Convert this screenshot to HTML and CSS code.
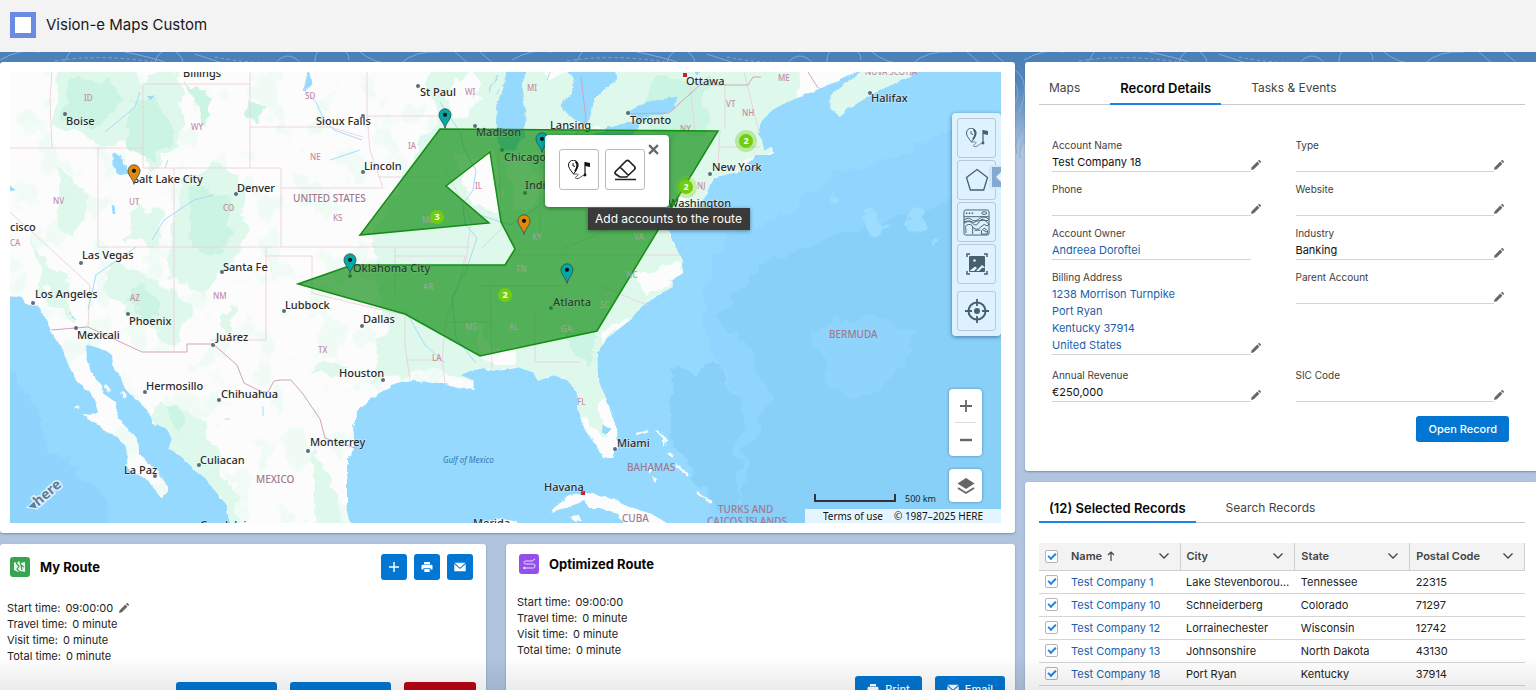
FILE: index.html
```html
<!DOCTYPE html>
<html lang="en">
<head>
<meta charset="utf-8">
<meta name="viewport" content="width=device-width, initial-scale=1">
<title>Vision-e Maps Custom</title>
<link rel="stylesheet" href="styles.css">
</head>
<body>
<svg class="defs" aria-hidden="true">
  <symbol id="pencil" viewBox="0 0 12 12"><path d="M1 11l.7-2.8L7.300 2.600l2.100 2.100L3.800 10.300z"/><path d="M8 1.900l.8-.8q.4-.4.8 0l1.300 1.300q.4.4 0 .8l-.8.8z"/></symbol>
  <symbol id="chevron" viewBox="0 0 12 8"><path d="M1.500 1.500L6 6l4.500-4.500" fill="none" stroke="currentColor" stroke-width="1.300"/></symbol>
  <symbol id="printer" viewBox="0 0 12 12"><path d="M3 1h6v2.200H3zM1.800 3.800h8.400q1.300 0 1.300 1.300v3.400H9.500V7h-7v1.500H.5V5.100q0-1.300 1.300-1.300zM3.300 7.800h5.400V11H3.300z"/></symbol>
  <symbol id="mail" viewBox="0 0 12 10"><path d="M.5.800h11L6 5.800z"/><path d="M.3 2l5.700 5 5.700-5v7.200H.3z"/></symbol>
  <symbol id="route-pin" viewBox="0 0 24 20"><path d="M6.500 14C3 9.500 1.500 7.500 1.500 5a4.800 4.800 0 0 1 9.600 0c0 2.500-1.500 5-4.600 9z" fill="none" stroke="currentColor" stroke-width="1"/><path d="M8.500 1.500c2.500 2 2.500 5-.5 10" fill="none" stroke="currentColor" stroke-width="1.700"/><path d="M6 3.200v2.600l2 .6" fill="none" stroke="currentColor"/><path d="M6.500 14.500c4-1.500 6 0 3.500 1.500s-2 3 1 2.500 3-3 6-3" fill="none" stroke="currentColor" stroke-width=".7"/><path d="M18 15V2" stroke="currentColor" stroke-width="1.200"/><path d="M18 2l5 1v4l-5-1z" fill="currentColor"/><circle cx="18" cy="15" r="1.400" fill="currentColor"/></symbol>
  <symbol id="marker" viewBox="0 0 14 21"><path d="M7 20.300C6 15 1 11.500 1 6.800a6 6 0 0 1 12 0C13 11.500 8 15 7 20.300z" stroke="#444" stroke-width=".8"/><circle cx="7" cy="6.800" r="2.100" fill="#111"/></symbol>
</svg>

<header class="app-header">
  <span class="app-logo" aria-hidden="true"></span>
  <h1 class="app-title">Vision-e Maps Custom</h1>
</header>

<main class="workspace">
  <svg class="backdrop" viewBox="0 0 1536 140" preserveAspectRatio="xMidYMin slice" aria-hidden="true">
    <g id="contours">
      <path d="M0 8q20-12 40-8M70 0q-10 20-30 26M125 0q30 6 45 12M155 12a14 14 0 0 1 28 0M195 2l30 10M275 12q12-16 27 0M315 10a17 17 0 0 1 34-2M360 0q15 12 30 11M400 12q15-14 40-12M455 0l14 12M480 0l14 12"/>
      <path d="M55 9q50-8 110 3M215 5q30 6 50 5" stroke-dasharray="3 3"/>
    </g>
    <use href="#contours" x="512"/><use href="#contours" x="1024"/>
    <path d="M1015 18q12 8 9 26t-9 20M1014 30q7 8 1 22M1026 72q-14 14-9 30M1026 86q-8 8-6 20"/>
  </svg>

  <div class="column column-left">
    <section class="card map-card" aria-label="Map">
      <div class="map">
        <svg class="map-canvas" viewBox="10 72 991 451" preserveAspectRatio="xMidYMid slice">
          <defs>
            <filter id="rough" x="0" y="0" width="1" height="1"><feTurbulence type="fractalNoise" baseFrequency=".045" numOctaves="4" seed="7"/><feDisplacementMap in="SourceGraphic" scale="26" xChannelSelector="R" yChannelSelector="G"/></filter>
            <filter id="coast" x="0" y="0" width="1" height="1"><feTurbulence type="fractalNoise" baseFrequency=".12" numOctaves="3" seed="3"/><feDisplacementMap in="SourceGraphic" scale="5" xChannelSelector="R" yChannelSelector="G"/></filter>
            <filter id="patches" x="0" y="0" width="1" height="1"><feTurbulence type="fractalNoise" baseFrequency=".035 .028" numOctaves="4" seed="12"/><feColorMatrix values="0 0 0 0 .85  0 0 0 0 .965  0 0 0 0 .91  14 0 0 0 -7.900"/></filter>
            <path id="land-shape" d="M0 60V296L20 297 27 303 39 306 43 313 48 323 51 331 58 342 63 350 67 362 73 373 77 381 90 392 95 402 98 412 90 415 82 414 95 423 107 432 117 437 125 445 128 457 125 467 137 473 150 483 160 497 168 491 165 482 157 470 148 463 138 452 137 438 128 430 118 417 115 403 105 393 100 383 92 373 87 360 86 345 100 348 112 355 113 367 120 375 125 388 137 400 150 413 153 423 167 428 172 438 169 448 182 457 193 468 205 478 217 493 227 505 228 515 232 530H353L347 513V460L355 448 353 427 358 410 370 400 387 388 400 382 413 380 433 383 443 383 457 388 475 390 473 380 460 375 470 371 483 368 497 370 517 367 533 372 538 381 553 375 567 380 578 393 577 410 585 430 597 447 603 458 613 458 618 447 617 430 608 403 598 380 597 353 607 338 630 320 640 308 657 295 673 287 672 279 683 273 681 257 673 243 668 230 672 215 680 207 690 215 697 208 705 197 712 180 716 177 758 167 748 163 755 155 772 155 771 147 764 151 762 140 758 134 760 123 772 110 787 102 800 97 817 90 840 80 857 72 870 60z"/>
            <clipPath id="land-clip"><use href="#land-shape"/></clipPath>
          </defs>
          <rect x="0" y="60" width="1020" height="480" fill="#96d9ff"/>
          <g filter="url(#rough)">
            <path fill="#8fd5fd" d="M1020 130L955 130 890 160 840 170 800 200 760 225 720 245 705 290 700 330 725 370 745 400 735 430 720 450 700 480 720 540 1020 540z"/>
            <path fill="#89d0f8" d="M1020 160L950 200 900 215 840 235 800 250 750 275 720 320 750 350 770 400 745 450 740 540H1020z"/>
            <path fill="#89d0f8" d="M673 370L720 370 745 400 735 430 740 540 700 480 670 440z"/>
            <path fill="#8ed4fb" d="M815 330L860 315 920 330 900 370 860 400 830 380z"/>
            <path fill="#8fd4fc" d="M0 370l30 20 20 60 40 30 40 70H0z"/>
          </g>
          <g fill="#9bdcff" filter="url(#rough)"><path d="M860 215h20l10 15-20 5zM905 208l15-4 5 20-15 5zM830 190l8 5-2 8zM930 235l8 4-6 10z"/></g>
          <g filter="url(#coast)" fill="#fcfcfc">
            <use href="#land-shape"/>
            <path fill="#e0f9ee" d="M863 70L847 82 832 93 830 107 840 117 850 107 867 97 887 87 910 77 912 70z"/>
            <path d="M550 512L560 502 570 496 587 493 613 498 630 507 650 513 672 526H625L617 514 600 508 587 508 584 500 570 507z"/>
            <path d="M571 516l8-1 2 5-7 1zM640 433l10-3M648 462l4 8-3 4zM652 476l5 3-2 4zM662 432l5 8-1 7M675 462l4 6M683 468l6 8M480 521l20-3 16 4v8h-36z"/>
            <path d="M637 434l12-3M656 430l7 7v9M668 453l5 4M677 464l11 12M697 492l14 10" stroke="#fcfcfc" stroke-width="2" fill="none"/>
            <path d="M75 407l4 2M104 385l5 6M121 392l4 3-1 3" stroke="#fcfcfc" stroke-width="3"/>
          </g>
          <g clip-path="url(#land-clip)">
            <rect x="0" y="60" width="480" height="480" filter="url(#patches)" opacity=".75"/>
            <g filter="url(#rough)" fill="#dff8ec">
              <path d="M55 60h60l30 25-5 50-40 10-45-20zM125 95l40-30 20 20-5 60-35 25zM182 180l40-20 25 30-5 60-40 50-35-30zM60 170l30 20-15 50-20-30zM135 200l30 20-10 30-30-15z"/>
              <path d="M30 240l40 50 10 35-30-20zM110 265l60 20 25 35-20 20-30-15-40-30zM160 400l45 20 15 50 25 60-15 10-40-70-50-45zM225 310h12v20h-12zM310 370l40-10-20 20z"/>
              <path d="M500 60h300v80l-60 30-40 60-30 80-60 40-10 60-30-20-60-15-80-5-60 15 15-60-15-80 30-60 40-80z"/>
              <path d="M425 60h85l-10 60-30 20-25-10-20-40zM395 245h110l20-30 20 60-30 80-50 10-40-10-10-60zM572 395h25l12 50-15-10zM315 440l20 60 20 40-40-10z"/>
            </g>
            <g filter="url(#rough)" fill="#cbf4e2">
              <path d="M70 80l40-5 15 30-30 20-35-10zM130 100l25 0 20 40-25 20-20-10zM190 85l25 10-5 25-15-15zM245 95l20 10-3 20-15-10zM190 190l35 5 10 40-20 20-30-15zM130 285l35 25-15 10-30-20z"/>
              <path d="M660 75l50 5-5 50-40 10-30-15zM570 330l25 5-5 30-20-10zM170 405l15 10-5 20-15-15z"/>
            </g>
            <g fill="#fcfcfc" filter="url(#rough)">
              <path d="M450 75l20 0 10 25-15 20-20-20zM455 155l40-5 10 60-30 0zM505 160h30l10 40-30 10zM590 130l20-5 5 15zM540 60h40v16h-30zM475 330l40 20-5 15-30-5zM640 275l35-15 5 20-40 20zM600 330l30-20 5 8-30 20zM675 185l20-10 5 10-20 20z"/>
            </g>
          </g>
          <g class="lake" filter="url(#coast)">
            <path d="M507 60h28l-12 17-1 16 3 20-1 24-10 14-14-3-4-20 2-25 8-20zM496 95l4-8M553 60h64l-2 22-10 6-12 12-2 14-6 11-12-6-12-13 14-18-2-12zM585 140l22-12 26-6 12-8-18 30-34 4zM627 112l23-10 27-5-3 12-14 5-26 3zM498 75l-10 18"/>
            <path d="M113 153l8 4 7 16-8 2-7-12zM111 205l5 4-2 5zM305 88l4-16 2 12-7 8zM604 425l7 4-5 5-4-4zM10 185l5 4-4 2zM147 95l7 2-3 3zM68 312l8 8M690 60h16l-8 14z"/>
          </g>
          <g class="rivers">
            <path d="M308 72l-4 18 12 12 8 18 10 10 28 10M440 102l20 30 4 18 12 20-3 20-10 14 2 20 12 14-10 30-15 30 4 40 20 25M152 240l12-20 30-20 20-5M88 310l8-35 40-28M105 132l30-25 5-15M405 310l20 35 20 18M330 160l30-10M165 168l3-8M480 215l30 10 30-20 20-25M263 406v10M225 419h5M555 60l-8 20"/>
          </g>
          <g class="state-lines">
            <path d="M52 72l-2 28 2 48M10 148h133M143 84v84h138M143 84h107M250 72v96M98 148v99h372M174 168v183M250 127h80l33 10M367 72v44h77M367 116l3 34 13 38M281 168v79M281 188h102M378 177h62M266 247v93h-56M266 256h46v37l40 10 53 12v30l5 35M395 247v9h70l-2 10M10 212l80 73-2 42M395 255v40M405 360h36M446 170l25 50-5 40-20 60-4 40 4 30M446 322h45M490 285l2 85M535 310v52h45M540 160v80M540 160h60M600 135v50M510 255h170M480 286h90M600 286l50 20M560 250l60-25 60-5M630 225l30-25M690 85l5 45M725 84v45M744 72l15 60M718 147h42M720 130l-2 35M498 148l4 80-20 20"/>
          </g>
          <g class="country-lines">
            <path d="M51 330l37-3 54 25h45v-8h26l24 21 7 18 18 9h6l6-11 6-1h11l12 14 17 25 5 19 30 10M581 76l5 44-10 15M627 114l42-1 31-28h48l5-8h8M808 72l10 16"/>
          </g>
          <g class="state-names">
            <text x="84" y="101">ID</text><text x="191" y="130">WY</text><text x="305" y="99">SD</text><text x="465" y="95">WI</text><text x="527" y="91">MI</text><text x="310" y="160">NE</text><text x="408" y="149">IA</text><text x="475" y="189">IL</text><text x="53" y="204">NV</text><text x="129" y="205">UT</text><text x="223" y="211">CO</text><text x="333" y="221">KS</text><text x="10" y="246">CA</text><text x="130" y="301">AZ</text><text x="213" y="299">NM</text><text x="318" y="353">TX</text><text x="432" y="361">LA</text><text x="577" y="405">FL</text><text x="778" y="81">ME</text><text x="726" y="107">VT</text><text x="742" y="116">NH</text><text x="680" y="132">NY</text><text x="697" y="189">NJ</text><text x="865" y="75">NOVA SCOTIA</text>
          </g>
          <g class="country-names">
            <text x="293" y="202">UNITED STATES</text><text x="256" y="483">MEXICO</text><text x="627" y="471">BAHAMAS</text><text x="622" y="522">CUBA</text><text x="829" y="338">BERMUDA</text><text x="718" y="513">TURKS AND</text><text x="707" y="525">CAICOS ISLANDS</text>
          </g>
          <text class="sea-name" x="443" y="463">Gulf of Mexico</text>
          <g class="city-dots"><circle cx="65" cy="114" r="2"/><circle cx="363" cy="116" r="2"/><circle cx="363" cy="172" r="2"/><circle cx="418" cy="86" r="2"/><circle cx="475" cy="126" r="2"/><circle cx="502" cy="150" r="2"/><circle cx="525" cy="193" r="2"/><circle cx="628" cy="113" r="2"/><circle cx="710" cy="174" r="2"/><circle cx="870" cy="93" r="2"/><circle cx="236" cy="194" r="2"/><circle cx="81" cy="263" r="2"/><circle cx="222" cy="272" r="2"/><circle cx="33" cy="303" r="2"/><circle cx="128" cy="314" r="2"/><circle cx="76" cy="328" r="2"/><circle cx="213" cy="345" r="2"/><circle cx="284" cy="311" r="2"/><circle cx="362" cy="326" r="2"/><circle cx="383" cy="380" r="2"/><circle cx="145" cy="392" r="2"/><circle cx="219" cy="400" r="2"/><circle cx="308" cy="451" r="2"/><circle cx="199" cy="465" r="2"/><circle cx="155" cy="476" r="2"/><circle cx="551" cy="308" r="2"/><circle cx="350" cy="276" r="2"/><circle cx="615" cy="449" r="2"/></g>
          <path d="M683 73h4v4h-4zM581 491h4v4h-4z" fill="#c8242b"/>
          <g class="city-names">
            <text x="183" y="77">Billings</text><text x="66" y="125">Boise</text><text x="420" y="96">St Paul</text><text x="316" y="125">Sioux Falls</text><text x="364" y="170">Lincoln</text><text x="133" y="183">Salt Lake City</text><text x="237" y="192">Denver</text><text x="10" y="231">cisco</text><text x="82" y="259">Las Vegas</text><text x="223" y="271">Santa Fe</text><text x="35" y="298">Los Angeles</text><text x="129" y="325">Phoenix</text><text x="77" y="339">Mexicali</text><text x="216" y="341">Juárez</text><text x="285" y="309">Lubbock</text><text x="363" y="323">Dallas</text><text x="339" y="377">Houston</text><text x="146" y="390">Hermosillo</text><text x="221" y="398">Chihuahua</text><text x="310" y="446">Monterrey</text><text x="200" y="464">Culiacan</text><text x="124" y="474">La Paz</text><text x="200" y="529">Guadalajara</text><text x="473" y="527">Merida</text><text x="544" y="491">Havana</text><text x="617" y="447">Miami</text><text x="686" y="85">Ottawa</text><text x="630" y="124">Toronto</text><text x="550" y="129">Lansing</text><text x="712" y="171">New York</text><text x="668" y="207">Washington</text><text x="871" y="102">Halifax</text>
          </g>
          <path d="M440 129L718 131 597 331 480 356 405 314 298 284 352 265H505L515 249 501 222 490 152 446 186 489 223 360 235z" fill="#078a0b" fill-opacity=".66" stroke="#128e14" stroke-width="1.500"/>
          <g class="state-names tinted">
            <text x="422" y="223">MO</text><text x="423" y="290">AR</text><text x="465" y="330">MS</text><text x="509" y="330">AL</text><text x="561" y="332">GA</text><text x="600" y="308">SC</text><text x="626" y="278">NC</text><text x="634" y="240">VA</text><text x="532" y="240">KY</text><text x="516" y="272">TN</text>
          </g>
          <g class="city-names tinted">
            <text x="476" y="136">Madison</text><text x="504" y="161">Chicago</text><text x="525" y="189">Indianapolis</text><text x="353" y="272">Oklahoma City</text><text x="553" y="306">Atlanta</text>
          </g>
          <g class="clusters">
            <circle cx="746" cy="141" r="11" fill-opacity=".35"/><circle cx="686" cy="187" r="11" fill-opacity=".35"/>
            <circle cx="746" cy="141" r="7"/><circle cx="686" cy="187" r="7"/><circle cx="437" cy="217" r="7"/><circle cx="505" cy="295" r="7"/>
            <text x="746" y="144">2</text><text x="686" y="190">2</text><text x="437" y="220">3</text><text x="505" y="298">2</text>
          </g>
          <g fill="#00aaa6"><use href="#marker" x="438" y="108" width="14" height="21"/><use href="#marker" x="535" y="132" width="14" height="21"/><use href="#marker" x="343" y="253" width="14" height="21"/><use href="#marker" x="560" y="263" width="14" height="21"/></g>
          <g fill="#e08a0b"><use href="#marker" x="127" y="164" width="14" height="21"/><use href="#marker" x="517" y="214" width="14" height="21"/></g>
          <g transform="rotate(-41 45 493)">
            <text class="here-mark" x="31" y="499">here</text>
            <path d="M22 492h10l-3 8z" fill="#5d7f9f" stroke="#dff1fc" stroke-width="1"/>
          </g>
        </svg>

        <div class="map-popup">
          <button class="popup-action" aria-label="Add accounts to the route"><svg class="icon-pin"><use href="#route-pin"/></svg></button>
          <button class="popup-action" aria-label="Erase"><svg class="icon-eraser" viewBox="0 0 24 22"><path d="M2.500 12.500L13 2q1.500-1.200 3 0l5.500 5.500q1.300 1.500 0 3L13.500 18H7l-4.500-3q-1-1.200 0-2.500zM7 8l8.500 8.500" fill="none" stroke="#222" stroke-width="1.700" stroke-linejoin="round"/><path d="M2 20.500h21" stroke="#222" stroke-width="1.500"/></svg></button>
          <button class="popup-close" aria-label="Close"><svg viewBox="0 0 10 10"><path d="M1 1l8 8M9 1L1 9" stroke="#666" stroke-width="2"/></svg></button>
        </div>
        <div class="tooltip" role="tooltip">Add accounts to the route</div>

        <div class="toolbar">
          <button class="tool" aria-label="Route"><svg class="icon-pin"><use href="#route-pin"/></svg></button>
          <button class="tool" aria-label="Polygon"><svg viewBox="0 0 24 24"><path d="M12 1.500L22.500 9.500 18.700 22H5.300L1.500 9.500z" fill="none" stroke="currentColor" stroke-width="1.300"/></svg></button>
          <button class="tool" aria-label="Map window"><svg class="icon-large" viewBox="0 0 28 28"><g fill="none" stroke="currentColor"><rect x="1" y="1" width="26" height="26" rx="2"/><path d="M1 8h26"/><rect x="19.500" y="3" width="5" height="2.500" rx="1.200"/><path d="M3 4.500h1.500M6 4.500h1.500M9 4.500h1.500" stroke-width="1.500"/><path d="M1 11q5-3 8 0t8-1 10 1M1 15q5-4 9 0t7-2 10 3M3 25v-4q-2-4 3-5 5 0 4 5v5M10 19q5 4 8 0l4-3q3 3 5 0M1 13q6-2 10 1 5-3 15-2M12 22h6M19 26q-1-4 3-6 5 2 3 6zM21 22l4 2"/></g></svg></button>
          <button class="tool" aria-label="Image"><svg viewBox="0 0 24 24"><path d="M2 5V2h3M19 2h3v3M22 19v3h-3M5 22H2v-3" fill="none" stroke="currentColor" stroke-width="1.500"/><path fill="currentColor" d="M5 4h14q1 0 1 1v14q0 1-1 1H5q-1 0-1-1V5q0-1 1-1z"/><circle cx="9.500" cy="8.500" r="1.300" fill="#e4f2fd"/><path d="M5 18.500l5-4 2 1.500-3 3H5zM11 19l6-6 2.500 2v1.500l-2-1-3.500 3.500z" fill="#e4f2fd"/></svg></button>
          <button class="tool tool-locate" aria-label="Locate"><svg viewBox="0 0 24 24"><circle cx="12" cy="12" r="8.500" fill="none" stroke="currentColor" stroke-width="2"/><circle cx="12" cy="12" r="3" fill="currentColor"/><path d="M12 0v7M12 17v7M0 12h7M17 12h7" stroke="currentColor" stroke-width="1.800"/></svg></button>
        </div>
        <button class="toolbar-toggle" aria-label="Collapse toolbar"></button>

        <div class="map-controls">
          <div class="zoom-box">
            <button aria-label="Zoom in"><svg viewBox="0 0 12 12"><path d="M6 0v12M0 6h12" stroke="currentColor" stroke-width="1.800"/></svg></button>
            <button aria-label="Zoom out"><svg viewBox="0 0 12 12"><path d="M0 6h12" stroke="currentColor" stroke-width="2.400"/></svg></button>
          </div>
          <button class="layers" aria-label="Layers"><svg viewBox="0 0 18 18"><path d="M9 1l8.500 5.500L9 12 .5 6.500z" fill="currentColor"/><path d="M1 11l8 5 8-5" fill="none" stroke="currentColor" stroke-width="1.800"/></svg></button>
        </div>
        <div class="scale"><span class="scale-bar"></span><span class="scale-text">500 km</span></div>
        <div class="legal"><a href="#">Terms of use</a><span>© 1987–2025 HERE</span></div>
      </div>
    </section>

    <div class="routes">
      <section class="card my-route">
        <div class="route-head">
          <svg class="route-icon" viewBox="0 0 20 20"><rect width="20" height="20" rx="3" fill="#36a451"/><path d="M4 5l3 1 2-2 2 2 4-1v10l-4-1-3 1-4-2z" fill="#e9f8ec"/><path d="M6 6l3 3-2 3 3 3M10 5l1 3 3 2M11 9l1 4" stroke="#36a451" stroke-width="1.200" fill="none"/></svg>
          <h2>My Route</h2>
          <div class="head-actions">
            <button class="btn-square" aria-label="Add"><svg viewBox="0 0 12 12"><path d="M6 1v10M1 6h10" stroke="currentColor" stroke-width="1.500"/></svg></button>
            <button class="btn-square" aria-label="Print"><svg><use href="#printer"/></svg></button>
            <button class="btn-square" aria-label="Email"><svg><use href="#mail"/></svg></button>
          </div>
        </div>
        <ul class="times">
          <li>Start time: <span>09:00:00</span><button class="edit" aria-label="Edit start time"><svg><use href="#pencil"/></svg></button></li>
          <li>Travel time: <span>0 minute</span></li>
          <li>Visit time: <span>0 minute</span></li>
          <li>Total time: <span>0 minute</span></li>
        </ul>
        <div class="route-actions"><button class="btn wide" aria-label="Optimize"></button><button class="btn wide" aria-label="Save"></button><button class="btn danger" aria-label="Clear"></button></div>
      </section>

      <section class="card optimized">
        <div class="route-head">
          <svg class="route-icon" viewBox="0 0 20 20"><rect width="20" height="20" rx="3" fill="#9350ea"/><path d="M13 7H6.500Q5 7 5 8.500T6.500 10h8q1.500 0 1.500 2t-1.500 2H7M13 7l3-2" fill="none" stroke="#eadcff" stroke-width="1"/><circle cx="5.500" cy="14" r="1.300" fill="#eadcff"/></svg>
          <h2>Optimized Route</h2>
        </div>
        <ul class="times">
          <li>Start time: <span>09:00:00</span></li>
          <li>Travel time: <span>0 minute</span></li>
          <li>Visit time: <span>0 minute</span></li>
          <li>Total time: <span>0 minute</span></li>
        </ul>
        <div class="route-actions"><button class="btn"><svg><use href="#printer"/></svg>Print</button><button class="btn"><svg><use href="#mail"/></svg>Email</button></div>
      </section>
    </div>
  </div>

  <div class="column column-right">
    <section class="card details">
      <nav class="tabs">
        <a href="#">Maps</a><a href="#" class="active" aria-current="page">Record Details</a><a href="#">Tasks &amp; Events</a>
      </nav>
      <dl class="fields">
        <div class="field"><dt>Account Name</dt><dd>Test Company 18</dd><button class="edit" aria-label="Edit Account Name"><svg><use href="#pencil"/></svg></button></div>
        <div class="field"><dt>Type</dt><dd></dd><button class="edit" aria-label="Edit Type"><svg><use href="#pencil"/></svg></button></div>
        <div class="field"><dt>Phone</dt><dd></dd><button class="edit" aria-label="Edit Phone"><svg><use href="#pencil"/></svg></button></div>
        <div class="field"><dt>Website</dt><dd></dd><button class="edit" aria-label="Edit Website"><svg><use href="#pencil"/></svg></button></div>
        <div class="field"><dt>Account Owner</dt><dd><a href="#">Andreea Doroftei</a></dd></div>
        <div class="field"><dt>Industry</dt><dd>Banking</dd><button class="edit" aria-label="Edit Industry"><svg><use href="#pencil"/></svg></button></div>
        <div class="field address"><dt>Billing Address</dt><dd><a href="#">1238 Morrison Turnpike<br>Port Ryan<br>Kentucky 37914<br>United States</a></dd><button class="edit" aria-label="Edit Billing Address"><svg><use href="#pencil"/></svg></button></div>
        <div class="field"><dt>Parent Account</dt><dd></dd><button class="edit" aria-label="Edit Parent Account"><svg><use href="#pencil"/></svg></button></div>
        <div class="field"><dt>Annual Revenue</dt><dd>€250,000</dd><button class="edit" aria-label="Edit Annual Revenue"><svg><use href="#pencil"/></svg></button></div>
        <div class="field"><dt>SIC Code</dt><dd></dd><button class="edit" aria-label="Edit SIC Code"><svg><use href="#pencil"/></svg></button></div>
      </dl>
      <div class="details-actions"><button class="btn">Open Record</button></div>
    </section>

    <section class="card records">
      <nav class="tabs">
        <a href="#" class="active" aria-current="page">(12) Selected Records</a><a href="#">Search Records</a>
      </nav>
      <table class="grid">
        <colgroup><col class="col-check"><col class="col-name"><col><col><col></colgroup>
        <thead><tr>
          <th><input type="checkbox" checked aria-label="Select all"></th>
          <th class="name"><button>Name <svg class="arrow" viewBox="0 0 8 10"><path d="M4 10V1M1 4l3-3 3 3" fill="none" stroke="currentColor" stroke-width="1.200"/></svg><svg class="chev"><use href="#chevron"/></svg></button></th>
          <th><button>City<svg class="chev"><use href="#chevron"/></svg></button></th>
          <th><button>State<svg class="chev"><use href="#chevron"/></svg></button></th>
          <th><button>Postal Code<svg class="chev"><use href="#chevron"/></svg></button></th>
        </tr></thead>
        <tbody>
          <tr><td><input type="checkbox" checked aria-label="Select Test Company 1"></td><td><a href="#">Test Company 1</a></td><td>Lake Stevenborough</td><td>Tennessee</td><td>22315</td></tr>
          <tr><td><input type="checkbox" checked aria-label="Select Test Company 10"></td><td><a href="#">Test Company 10</a></td><td>Schneiderberg</td><td>Colorado</td><td>71297</td></tr>
          <tr><td><input type="checkbox" checked aria-label="Select Test Company 12"></td><td><a href="#">Test Company 12</a></td><td>Lorrainechester</td><td>Wisconsin</td><td>12742</td></tr>
          <tr><td><input type="checkbox" checked aria-label="Select Test Company 13"></td><td><a href="#">Test Company 13</a></td><td>Johnsonshire</td><td>North Dakota</td><td>43130</td></tr>
          <tr><td><input type="checkbox" checked aria-label="Select Test Company 18"></td><td><a href="#">Test Company 18</a></td><td>Port Ryan</td><td>Kentucky</td><td>37914</td></tr>
        </tbody>
      </table>
    </section>
  </div>
</main>
<div class="bottom-shade"></div>
</body>
</html>
```

FILE: styles.css
```css
* { box-sizing: border-box; }
body {
  margin: 0;
  height: 100vh;
  overflow: hidden;
  display: flex;
  flex-direction: column;
  font: 11px/16px Inter, "Liberation Sans", sans-serif;
  color: #222;
  background: #b0c4df;
}
button { font: inherit; color: inherit; padding: 0; border: 0; background: none; cursor: pointer; }
a { color: #1b5fab; text-decoration: none; }
h1, h2, ul, dl, dd { margin: 0; padding: 0; }
svg { display: block; }
.defs { position: absolute; width: 0; height: 0; }

.app-header { flex: none; display: flex; align-items: center; gap: 10px; height: 52px; padding: 0 10px 2px; background: #f3f3f3; }
.app-logo { width: 26px; height: 26px; border: 5px solid #6b8be3; background: #fff; }
.app-title { font-size: 15px; font-weight: 400; line-height: 20px; color: #181818; }

.workspace {
  position: relative;
  flex: 1;
  min-height: 0;
  display: grid;
  grid-template-columns: 1015fr 511fr;
  gap: 10px;
  padding-top: 10px;
  background: linear-gradient(#4a80b7, #5488bd 35px, #b0c4df 100px);
}
.backdrop { position: absolute; top: 0; left: 0; width: 100%; height: 140px; fill: none; stroke: #86abd3; stroke-width: 1; }
.column { position: relative; min-width: 0; display: flex; flex-direction: column; gap: 11px; }
.card { background: #fff; border-radius: 3px; box-shadow: 0 1px 2px rgba(60, 80, 110, .45); }
.column-right .card { border-radius: 3px 0 0 3px; }

.map-card { padding: 10px 14px 10px 10px; }
.map { position: relative; height: 451px; overflow: hidden; }
.map-canvas { width: 100%; height: 100%; }
.map-canvas text { font-family: "Noto Sans", "Open Sans", sans-serif; }
.lake { fill: #96d9ff; stroke: #96d9ff; stroke-width: 1; }
.rivers { fill: none; stroke: #a6dcfb; stroke-width: 1; }
.state-lines { fill: none; stroke: #eacbd6; stroke-width: 1; opacity: .75; }
.country-lines { fill: none; stroke: #d3a4b4; stroke-width: 1; }
.city-names { font-size: 11px; font-weight: 500; fill: #2b2b2b; stroke: #fff; stroke-width: 1; stroke-opacity: .5; paint-order: stroke; }
.city-names.tinted { fill: #264029; stroke: #9aca9c; stroke-opacity: .4; }
.city-dots { fill: #5d6b82; }
.state-names { font-size: 8px; font-weight: 500; fill: #c68ba4; }
.state-names.tinted { fill: #9ba594; }
.country-names { font-size: 10px; font-weight: 500; fill: #a17a92; }
.sea-name { font-size: 8px; font-style: italic; fill: #3478ab; }
.clusters { fill: #6fce0d; }
.clusters text { font-size: 9px; font-weight: 700; fill: #fff; text-anchor: middle; }
.map-canvas .here-mark { font: 700 14px "Noto Sans", sans-serif; fill: #5d7f9f; stroke: #dff1fc; stroke-width: 3; paint-order: stroke; }

.map-popup { position: absolute; left: 535px; top: 63px; display: flex; gap: 6px; width: 124px; height: 72px; padding: 14px; background: #fff; border-radius: 4px; box-shadow: 0 1px 4px rgba(0, 0, 0, .4); }
.popup-action { display: grid; place-items: center; width: 40px; height: 41px; border: 1px solid #bbb; border-radius: 3px; color: #111; }
.icon-pin { width: 24px; height: 20px; }
.icon-eraser { width: 24px; height: 22px; }
.popup-close { position: absolute; right: 10px; top: 9px; width: 11px; height: 11px; }
.tooltip { position: absolute; left: 578px; top: 136px; padding: 3px 8px 3px 7px; line-height: 16px; font-size: 12px; color: #fff; background: #3a3a3a; box-shadow: 0 1px 4px rgba(0, 0, 0, .4); white-space: nowrap; }

.toolbar { position: absolute; right: 0; top: 41px; display: flex; flex-direction: column; gap: 2px; width: 49px; padding: 5px; background: rgba(232, 245, 255, .88); border-radius: 4px; box-shadow: 0 1px 4px rgba(40, 80, 130, .7); }
.tool { display: grid; place-items: center; height: 40px; border: 1px solid #b5c8dc; border-radius: 3px; color: #47606e; }
.tool svg { width: 24px; height: 24px; }
.tool .icon-pin { height: 20px; }
.tool .icon-large { width: 27px; height: 27px; }
.tool-locate { margin-top: 5px; }
.toolbar-toggle { position: absolute; right: 0; top: 93px; width: 12px; height: 24px; background: #84a9d1; border: 2px solid #d3e7f8; border-width: 2px 0 2px 3px; border-radius: 3px 0 0 3px; }
.toolbar-toggle::after { content: ""; position: absolute; right: 0; top: 5px; border: 5px solid transparent; border-left: 0; border-right-color: #e5f2fc; }

.map-controls { position: absolute; right: 19px; bottom: 21px; width: 33px; display: flex; flex-direction: column; gap: 13px; color: #666; }
.zoom-box, .layers { background: #fff; border-radius: 4px; box-shadow: 0 0 3px #4d7fae; }
.zoom-box { padding: 0 6px; }
.zoom-box button { display: grid; place-items: center; width: 100%; height: 33px; }
.zoom-box button + button { height: 34px; border-top: 1px solid #ddd; }
.zoom-box svg { width: 12px; height: 12px; }
.layers { display: grid; place-items: center; height: 33px; }
.layers svg { width: 18px; height: 18px; }
.scale { position: absolute; right: 65px; bottom: 18px; display: flex; align-items: center; gap: 9px; height: 14px; }
.scale-bar { width: 82px; height: 8px; border: 2px solid #333; border-top: 0; }
.scale-text { font: 9px "Noto Sans", sans-serif; }
.legal { position: absolute; right: 0; bottom: 0; display: flex; gap: 11px; padding: 0 18px; line-height: 14px; font-size: 10px; font-family: "Noto Sans", sans-serif; color: #111; background: rgba(240, 248, 255, .9); }
.legal a { color: inherit; }

.routes { flex: 1; min-height: 0; display: grid; grid-template-columns: 486fr 509fr; gap: 20px; }
.my-route, .optimized { display: flex; flex-direction: column; min-height: 170px; }
.route-head { display: flex; align-items: center; gap: 10px; }
.my-route .route-head { padding: 10px 13px 0 10px; }
.optimized .route-head { padding: 10px 13px 0; }
.route-icon { width: 20px; height: 20px; }
.route-head h2 { font-size: 13px; font-weight: 700; line-height: 20px; color: #080707; }
.head-actions { display: flex; gap: 7px; margin-left: auto; }
.btn-square { display: grid; place-items: center; width: 26px; height: 26px; border-radius: 3px; background: #0176d3; color: #fff; fill: #fff; }
.btn-square svg { width: 12px; height: 12px; }
.times { list-style: none; padding: 20px 7px 18px; color: #222; }
.optimized .times { padding: 20px 11px 18px; }
.times li { display: flex; align-items: center; gap: 5px; }
.edit { width: 12px; height: 12px; fill: #666; }
.edit svg { width: 12px; height: 12px; }
.route-actions { display: flex; justify-content: flex-end; gap: 13px; padding: 0 10px; }
.btn { flex: none; display: inline-flex; align-items: center; justify-content: center; gap: 6px; height: 26px; padding: 0 12px; border-radius: 3px; background: #0176d3; color: #fff; fill: #fff; font-weight: 500; }
.btn svg { width: 12px; height: 12px; }
.btn.wide { width: 101px; }
.btn.danger { width: 72px; background: #ba0517; }

.details, .records { padding: 0 11px 0 14px; }
.details { padding-bottom: 29px; }
.tabs { display: flex; align-items: flex-end; gap: 20px; border-bottom: 1px solid #c9c9c9; }
.details .tabs { margin-bottom: 33px; }
.tabs a { margin-bottom: -1px; padding: 17px 10px 6px; border-bottom: 2px solid transparent; font-size: 12px; line-height: 18px; color: #444; }
.records .tabs a { padding-bottom: 4px; }
.tabs .active { border-color: #1b85ec; font-size: 13px; font-weight: 600; color: #080707; }
.fields { display: grid; grid-template-columns: 1fr 1fr; column-gap: 30px; row-gap: 10px; padding: 0 16px 0 13px; }
.field { position: relative; padding-right: 15px; }
.field dt { font-size: 10px; line-height: 15px; color: #3e3e3c; }
.field dd { min-height: 19px; padding-top: 1px; border-bottom: 1px solid #d4d4d4; line-height: 17px; color: #111; }
.field.address { margin-bottom: 3px; }
.field .edit { position: absolute; right: 4px; margin-top: -13px; }
.details-actions { display: flex; justify-content: flex-end; padding: 14px 16px 0 0; }

.records { flex: 1; }
.grid { width: 100%; margin-top: 20px; table-layout: fixed; border-collapse: collapse; }
.col-check { width: 26px; }
.col-name { width: 115px; }
.grid th, .grid td { padding: 0 3px 0 6px; text-align: left; white-space: nowrap; overflow: hidden; text-overflow: ellipsis; }
.grid th { height: 27px; background: #f3f3f3; border-right: 1px solid #d0d0d0; border-bottom: 1px solid #d0d0d0; color: #444; }
.grid th:first-child { border-right: 0; }
.grid td { height: 23px; border-bottom: 1px solid #d4d4d4; }
.grid th:first-child, .grid td:first-child { text-overflow: clip; }
.grid th button { display: flex; align-items: center; gap: 5px; width: 100%; font-weight: 600; }
.arrow { width: 8px; height: 10px; }
.chev { width: 12px; height: 8px; margin-left: auto; margin-right: 7px; }
.grid input { appearance: none; display: grid; place-items: center; width: 13px; height: 13px; margin: 0; border: 1px solid #b5b5b5; border-radius: 2px; background: #fff; }
.grid input:checked::after { content: ""; width: 6px; height: 3px; margin-bottom: 2px; border: solid #1b85ec; border-width: 0 0 2px 2px; transform: rotate(-45deg); }

.bottom-shade { position: fixed; left: 0; right: 0; bottom: 0; height: 34px; background: linear-gradient(rgba(0, 0, 0, 0), rgba(0, 0, 0, .08)); pointer-events: none; }
```
